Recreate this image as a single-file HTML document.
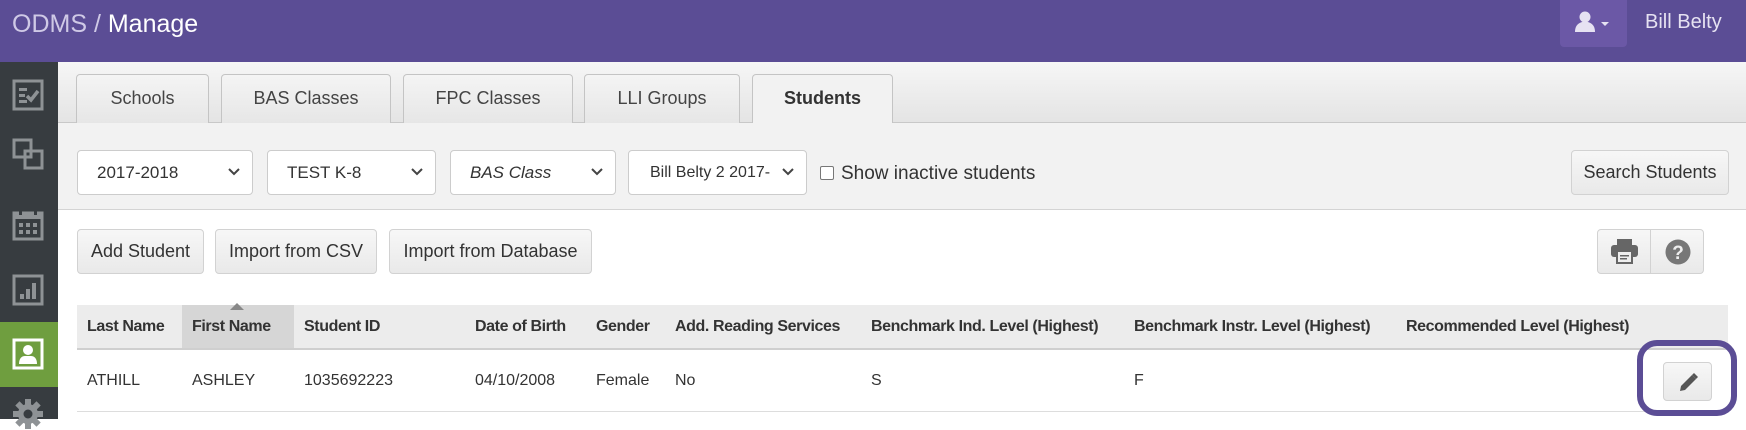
<!DOCTYPE html>
<html><head><meta charset="utf-8"><style>
*{box-sizing:border-box;margin:0;padding:0}
body{width:1746px;height:419px;overflow:hidden;font-family:"Liberation Sans",sans-serif;background:#fff;position:relative;color:#333}
.a{position:absolute}
#hdr{left:0;top:0;width:1746px;height:62px;background:#5b4d95}
#side{left:0;top:62px;width:58px;height:357px;background:#373c40}
#tabs{left:58px;top:62px;width:1688px;height:61px;background:linear-gradient(#f6f6f6,#e4e4e4);border-bottom:1px solid #c8c8c8}
.tab{top:74px;height:50px;border:1px solid #c4c4c4;border-bottom:none;border-radius:4px 4px 0 0;background:linear-gradient(#f4f4f4,#e6e6e6);font-size:18px;color:#444;text-align:center;line-height:46px}
#filt{left:58px;top:123px;width:1688px;height:87px;background:#f2f2f2;border-bottom:1px solid #d4d4d4}
.sel{top:150px;height:45px;background:#fff;border:1px solid #ccc;border-radius:4px;font-size:17px;color:#333;line-height:43px;padding-left:19px}
.sel svg{position:absolute;right:12px;top:17px}
.btn{height:45px;border:1px solid #d2d2d2;border-radius:4px;background:linear-gradient(#f7f7f7,#e9e9e9);font-size:18px;color:#333;text-align:center;line-height:43px}
.th{top:305px;font-weight:bold;font-size:16px;color:#333;line-height:43px;letter-spacing:-0.4px;white-space:nowrap}
.td{top:350px;font-size:16px;color:#333;line-height:61px;white-space:nowrap}
</style></head><body>
<div id="hdr" class="a">
 <div class="a" style="left:12px;top:10px;font-size:25px;color:#cfc9e6">ODMS / <span style="color:#fff">Manage</span></div>
 <div class="a" style="left:1560px;top:0;width:67px;height:47px;background:#6b58a6;border-radius:0 0 4px 4px">
  <svg class="a" style="left:14px;top:11px" width="40" height="22" viewBox="0 0 40 22"><circle cx="11" cy="6" r="5.5" fill="#e6e2f2"/><path d="M1 21 C1 14 5 12 8 11 L14 11 C17 12 21 14 21 21Z" fill="#e6e2f2"/><path d="M27 11 L35 11 L31 15Z" fill="#e6e2f2"/></svg>
 </div>
 <div class="a" style="left:1645px;top:11px;font-size:20px;color:#e6e2f2">Bill Belty</div>
</div>
<div id="side" class="a">
 <svg class="a" style="left:12px;top:17px" width="32" height="32" viewBox="0 0 32 32"><rect x="2" y="2" width="28" height="28" fill="none" stroke="#8e9295" stroke-width="3"/><rect x="7" y="9" width="8" height="3" fill="#8e9295"/><rect x="7" y="15" width="6" height="3" fill="#8e9295"/><rect x="7" y="21" width="8" height="3" fill="#8e9295"/><path d="M15 17 L19 21 L26 12" fill="none" stroke="#8e9295" stroke-width="3.5"/></svg>
 <svg class="a" style="left:12px;top:76px" width="32" height="32" viewBox="0 0 32 32"><rect x="2" y="2" width="17" height="17" fill="none" stroke="#8e9295" stroke-width="3"/><rect x="13" y="13" width="17" height="17" fill="none" stroke="#8e9295" stroke-width="3"/></svg>
 <svg class="a" style="left:12px;top:147px" width="32" height="32" viewBox="0 0 32 32"><rect x="2" y="4" width="28" height="26" fill="none" stroke="#8e9295" stroke-width="3"/><rect x="2" y="4" width="28" height="6" fill="#8e9295"/><g fill="#8e9295"><rect x="7" y="14" width="4" height="4"/><rect x="14" y="14" width="4" height="4"/><rect x="21" y="14" width="4" height="4"/><rect x="7" y="21" width="4" height="4"/><rect x="14" y="21" width="4" height="4"/><rect x="21" y="21" width="4" height="4"/></g><rect x="7" y="0" width="3" height="6" fill="#373c40"/><rect x="22" y="0" width="3" height="6" fill="#373c40"/></svg>
 <svg class="a" style="left:12px;top:212px" width="32" height="32" viewBox="0 0 32 32"><rect x="2" y="2" width="28" height="28" fill="none" stroke="#8e9295" stroke-width="3"/><rect x="8" y="20" width="4" height="5" fill="#8e9295"/><rect x="14" y="15" width="4" height="10" fill="#8e9295"/><rect x="20" y="9" width="4" height="16" fill="#8e9295"/></svg>
 <div class="a" style="left:0;top:260px;width:58px;height:65px;background:#6f9e3f">
  <svg class="a" style="left:12px;top:16px" width="32" height="32" viewBox="0 0 32 32"><rect x="2" y="2" width="28" height="28" fill="none" stroke="#fff" stroke-width="3"/><circle cx="16" cy="12" r="5" fill="#fff"/><path d="M7 26 C7 20 10 18 13 18 L19 18 C22 18 25 20 25 26Z" fill="#fff"/></svg>
 </div>
 <svg class="a" style="left:12px;top:336px" width="32" height="32" viewBox="0 0 32 32"><g fill="#8e9295"><rect x="13" y="1" width="6" height="30"/><rect x="1" y="13" width="30" height="6"/><rect x="13" y="1" width="6" height="30" transform="rotate(45 16 16)"/><rect x="13" y="1" width="6" height="30" transform="rotate(-45 16 16)"/></g><circle cx="16" cy="16" r="10" fill="#8e9295"/><circle cx="16" cy="16" r="4.5" fill="#373c40"/></svg>
</div>
<div id="tabs" class="a"></div>
<div class="a tab" style="left:76px;width:133px">Schools</div>
<div class="a tab" style="left:221px;width:170px">BAS Classes</div>
<div class="a tab" style="left:403px;width:170px">FPC Classes</div>
<div class="a tab" style="left:584px;width:156px">LLI Groups</div>
<div class="a tab" style="left:752px;width:141px;height:50px;background:#f2f2f2;font-weight:bold;color:#333">Students</div>
<div id="filt" class="a"></div>
<div class="a" style="left:753px;top:123px;width:139px;height:2px;background:#f2f2f2"></div>
<div class="a sel" style="left:77px;width:176px">2017-2018<svg width="12" height="8" viewBox="0 0 12 8"><path d="M1 1 L6 6 L11 1" fill="none" stroke="#444" stroke-width="2"/></svg></div>
<div class="a sel" style="left:267px;width:169px">TEST K-8<svg width="12" height="8" viewBox="0 0 12 8"><path d="M1 1 L6 6 L11 1" fill="none" stroke="#444" stroke-width="2"/></svg></div>
<div class="a sel" style="left:450px;width:166px;font-style:italic">BAS Class<svg width="12" height="8" viewBox="0 0 12 8"><path d="M1 1 L6 6 L11 1" fill="none" stroke="#444" stroke-width="2"/></svg></div>
<div class="a sel" style="left:628px;width:179px;padding-left:21px;font-size:16px">Bill Belty 2 2017-<svg width="12" height="8" viewBox="0 0 12 8"><path d="M1 1 L6 6 L11 1" fill="none" stroke="#444" stroke-width="2"/></svg></div>
<div class="a" style="left:820px;top:166px;width:14px;height:14px;border:1px solid #777;border-radius:2px;background:#fff"></div>
<div class="a" style="left:841px;top:163px;font-size:19px;color:#333">Show inactive students</div>
<div class="a btn" style="left:1571px;top:150px;width:158px;font-size:18px">Search Students</div>
<div class="a btn" style="left:77px;top:229px;width:127px">Add Student</div>
<div class="a btn" style="left:215px;top:229px;width:162px">Import from CSV</div>
<div class="a btn" style="left:389px;top:229px;width:203px">Import from Database</div>
<div class="a btn" style="left:1597px;top:229px;width:54px;border-radius:4px 0 0 4px">
 <svg class="a" style="left:13px;top:9px" width="27" height="25" viewBox="0 0 27 25"><rect x="6" y="0" width="15" height="6" fill="#666"/><rect x="0" y="6" width="27" height="12" rx="3" fill="#666"/><rect x="6" y="12" width="15" height="12" fill="#eee" stroke="#666" stroke-width="2"/><rect x="9" y="16" width="9" height="1.5" fill="#666"/><rect x="9" y="19" width="7" height="1.5" fill="#666"/></svg>
</div>
<div class="a btn" style="left:1650px;top:229px;width:54px;border-radius:0 4px 4px 0">
 <svg class="a" style="left:14px;top:9px" width="26" height="26" viewBox="0 0 26 26"><circle cx="13" cy="13" r="12.5" fill="#777"/><text x="13" y="20" font-family="Liberation Sans" font-weight="bold" font-size="19" fill="#eee" text-anchor="middle">?</text></svg>
</div>
<div class="a" style="left:77px;top:305px;width:1651px;height:45px;background:#ececec;border-bottom:2px solid #cfcfcf"></div>
<div class="a" style="left:182px;top:305px;width:112px;height:43px;background:#d6d6d6"></div>
<svg class="a" style="left:230px;top:302px" width="14" height="8"><path d="M0 8 L7 1 L14 8Z" fill="#888"/></svg>
<div class="a th" style="left:87px">Last Name</div>
<div class="a th" style="left:192px">First Name</div>
<div class="a th" style="left:304px">Student ID</div>
<div class="a th" style="left:475px">Date of Birth</div>
<div class="a th" style="left:596px">Gender</div>
<div class="a th" style="left:675px">Add. Reading Services</div>
<div class="a th" style="left:871px">Benchmark Ind. Level (Highest)</div>
<div class="a th" style="left:1134px">Benchmark Instr. Level (Highest)</div>
<div class="a th" style="left:1406px">Recommended Level (Highest)</div>
<div class="a td" style="left:87px">ATHILL</div>
<div class="a td" style="left:192px">ASHLEY</div>
<div class="a td" style="left:304px">1035692223</div>
<div class="a td" style="left:475px">04/10/2008</div>
<div class="a td" style="left:596px">Female</div>
<div class="a td" style="left:675px">No</div>
<div class="a td" style="left:871px">S</div>
<div class="a td" style="left:1134px">F</div>
<div class="a" style="left:77px;top:411px;width:1651px;height:1px;background:#ddd"></div>
<div class="a btn" style="left:1663px;top:362px;width:49px;height:39px"><svg class="a" style="left:15px;top:10px" width="19" height="19" viewBox="0 0 19 19"><path d="M1 18 L2 13 L13 2 L17 6 L6 17Z" fill="#555"/><path d="M13 2 L15 0 L19 4 L17 6Z" fill="#555"/></svg></div>
<div class="a" style="left:1637px;top:340px;width:100px;height:76px;border:6px solid #5b4d95;border-radius:20px"></div>
</body></html>
